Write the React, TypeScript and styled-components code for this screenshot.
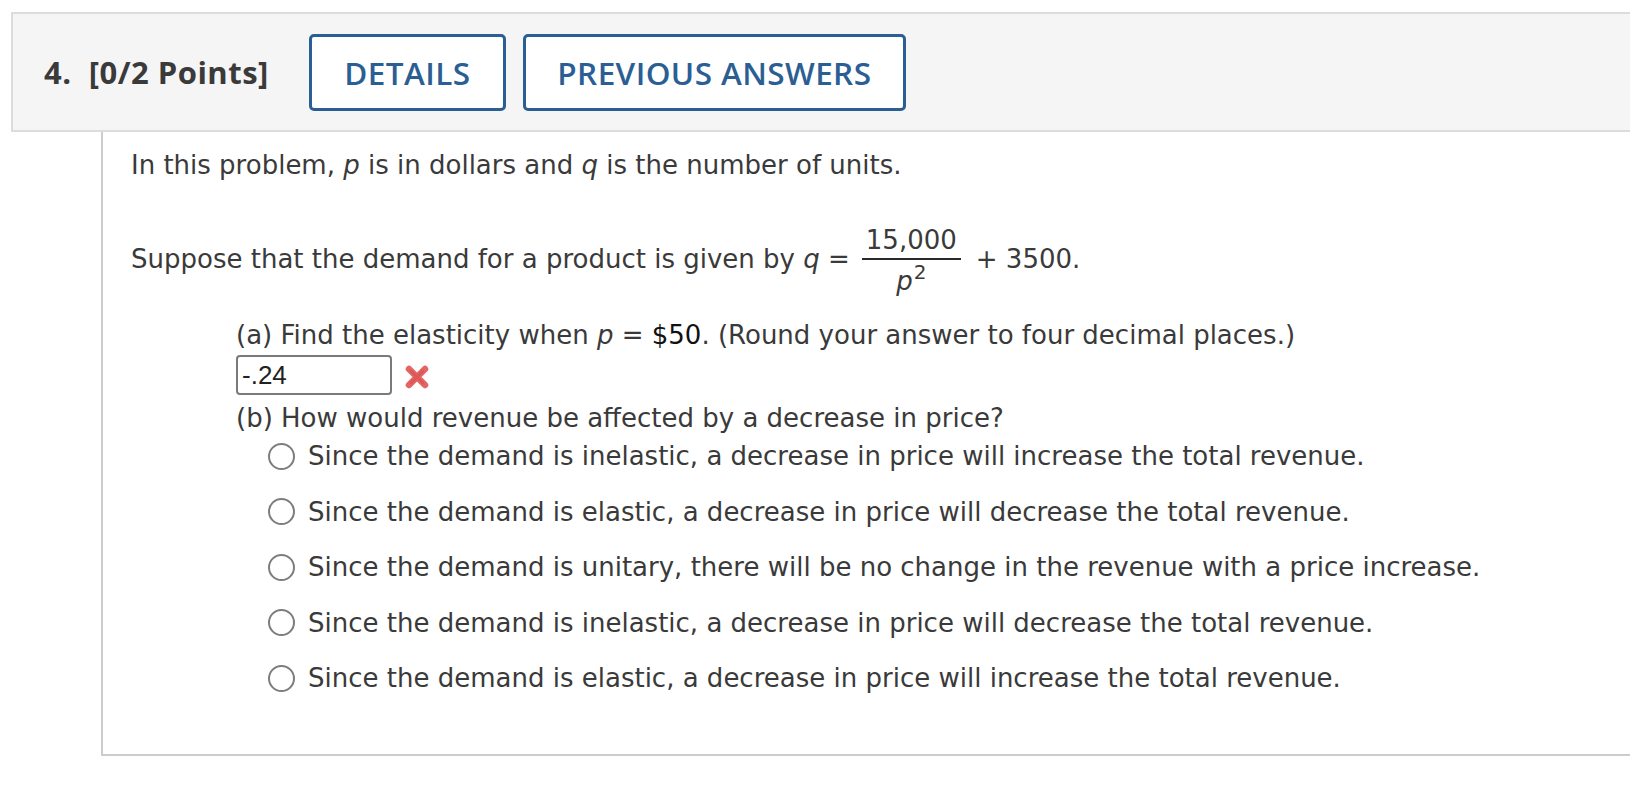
import styled, { createGlobalStyle } from "styled-components";

const GlobalStyle = createGlobalStyle`
	html, body {
		margin: 0;
		padding: 0;
		background: #ffffff;
		overflow: hidden;
	}
`;

const Page = styled.div`
	padding: 12px 0 0 11px;
	width: 1700px;
`;

const Header = styled.div`
	display: flex;
	align-items: center;
	height: 116px;
	background-color: #f5f5f5;
	border: 2px solid #dcdcdc;
	border-right: none;
	padding-left: 31px;
	font-family: "Open Sans", sans-serif;
`;

const Points = styled.span`
	font-size: 31px;
	font-weight: 700;
	color: #3a3a3a;
	margin-right: 40px;
	white-space: pre;
	letter-spacing: 0.5px;
`;

const HeaderButton = styled.button<{ w: number }>`
	width: ${props => props.w}px;
	height: 77px;
	margin-right: 17px;
	background: #ffffff;
	border: 3px solid #2b5f94;
	border-radius: 5px;
	color: #2b5f94;
	font-family: "Open Sans", sans-serif;
	font-size: 31.5px;
	font-weight: 600;
	letter-spacing: 0.4px;
	cursor: pointer;
`;

const Body = styled.div`
	margin-left: 90px;
	border-left: 2px solid #cccccc;
	border-bottom: 2px solid #cccccc;
	padding: 17px 0 60px 28px;
	font-family: "DejaVu Sans", Verdana, sans-serif;
	font-size: 26px;
	color: #3a3a3a;
`;

const Line = styled.div`
	line-height: 32px;
`;

const Var = styled.i`
	font-family: "DejaVu Sans", Verdana, sans-serif;
`;

const EquationRow = styled.div`
	display: flex;
	align-items: center;
	margin-top: 45px;
	line-height: 32px;
`;

const Fraction = styled.span`
	display: inline-flex;
	flex-direction: column;
	align-items: center;
	margin: 0 15px 0 12px;
`;

const Numerator = styled.span`
	line-height: 28px;
	padding: 0 4px;
`;

const Rule = styled.span`
	align-self: stretch;
	height: 2px;
	margin: 4px 0;
	background: #2a2a2a;
`;

const Denominator = styled.span`
	line-height: 28px;
	position: relative;
	top: 3px;
	sup {
		font-size: 20px;
		vertical-align: 11px;
		line-height: 0;
		margin-left: 1px;
	}
`;

const Part = styled.div`
	margin-left: 105px;
`;

const PartLine = styled.div<{ top: number }>`
	line-height: 32px;
	margin-top: ${props => props.top}px;
`;

const Strong = styled.span`
	color: #111111;
`;

const AnswerRow = styled.div`
	display: flex;
	align-items: center;
	margin-top: 4px;
	height: 40px;
`;

const AnswerBox = styled.div`
	box-sizing: border-box;
	width: 156px;
	height: 40px;
	border: 2px solid #7a7a7a;
	border-radius: 4px;
	padding: 2px 0 0 4px;
	font-family: "Liberation Sans", Arial, sans-serif;
	font-size: 26px;
	line-height: 32px;
	color: #222222;
	background: #ffffff;
`;

const WrongMark = styled.svg`
	margin-left: 12px;
	margin-top: 4px;
`;

const Options = styled.div`
	display: flex;
	flex-direction: column;
	gap: 23.6px;
	margin-top: 6px;
	margin-left: 32px;
`;

const Option = styled.label`
	display: flex;
	align-items: center;
	line-height: 32px;
	gap: 13px;
`;

const Radio = styled.span`
	box-sizing: border-box;
	width: 27px;
	height: 27px;
	border: 2px solid #7d7d7d;
	border-radius: 50%;
	background: #ffffff;
	flex-shrink: 0;
`;

const options = [
	"Since the demand is inelastic, a decrease in price will increase the total revenue.",
	"Since the demand is elastic, a decrease in price will decrease the total revenue.",
	"Since the demand is unitary, there will be no change in the revenue with a price increase.",
	"Since the demand is inelastic, a decrease in price will decrease the total revenue.",
	"Since the demand is elastic, a decrease in price will increase the total revenue.",
];

function App() {
	return (
		<>
			<GlobalStyle />
			<Page>
				<Header>
					<Points>{"4.  [0/2 Points]"}</Points>
					<HeaderButton w={197}>DETAILS</HeaderButton>
					<HeaderButton w={383}>PREVIOUS ANSWERS</HeaderButton>
				</Header>
				<Body>
					<Line>
						In this problem, <Var>p</Var> is in dollars and <Var>q</Var> is the number of units.
					</Line>
					<EquationRow>
						<span>
							Suppose that the demand for a product is given by <Var>q</Var> =
						</span>
						<Fraction>
							<Numerator>15,000</Numerator>
							<Rule />
							<Denominator>
								<Var>p</Var>
								<sup>2</sup>
							</Denominator>
						</Fraction>
						<span>+ 3500.</span>
					</EquationRow>
					<Part>
						<PartLine top={27}>
							(a) Find the elasticity when <Var>p</Var> = <Strong>$50</Strong>. (Round your answer to four decimal places.)
						</PartLine>
						<AnswerRow>
							<AnswerBox>-.24</AnswerBox>
							<WrongMark width="26" height="26" viewBox="0 0 26 26">
								<path d="M5 5 L21 21 M21 5 L5 21" stroke="#e46464" strokeWidth="6.5" strokeLinecap="round" />
								<path d="M7 7 L19 19 M19 7 L7 19" stroke="#d94a4a" strokeWidth="2.5" strokeLinecap="round" opacity="0.5" />
							</WrongMark>
						</AnswerRow>
						<PartLine top={7}>(b) How would revenue be affected by a decrease in price?</PartLine>
						<Options>
							{options.map((text, i) => (
								<Option key={i}>
									<Radio />
									<span>{text}</span>
								</Option>
							))}
						</Options>
					</Part>
				</Body>
			</Page>
		</>
	);
}

export default App;
